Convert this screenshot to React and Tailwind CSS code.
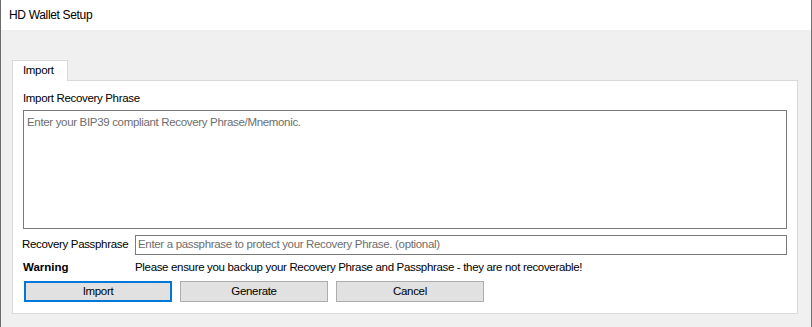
import React from 'react';

export default function App() {
    return (
        <div className="w-[812px] h-[327px] flex flex-col bg-[#f0f0f0] border-l border-l-[#6b6b6b] border-r border-r-[#717171] text-[11.5px] tracking-[-0.33px] text-black" style={{ fontFamily: '"Liberation Sans", Arial, sans-serif' }}>
            {/* Title bar */}
            <div className="h-[30px] shrink-0 bg-white flex items-center pl-[8px]">
                <span className="leading-none text-[12px]">HD Wallet Setup</span>
            </div>

            <div className="flex-1 pt-[30px] pl-[11px] pr-[13px]">
                {/* Tabs */}
                <div className="flex">
                    <div className="relative z-10 -mb-px w-[56px] h-[21px] bg-white border border-b-0 border-[#d9d9d9] flex items-center pl-[10px]">
                        Import
                    </div>
                </div>

                {/* Panel */}
                <div className="h-[234px] bg-white border border-[#d9d9d9] pt-[9px] pl-[10px] pr-[10px] flex flex-col">
                    <div className="h-[16px] leading-[16px] mb-[4px]">Import Recovery Phrase</div>
                    <div className="h-[119px] border border-[#7a7a7a] px-[3px] pt-[3px] text-[#6d6d6d] leading-[16px]">
                        Enter your BIP39 compliant Recovery Phrase/Mnemonic.
                    </div>

                    <div className="mt-[6px] flex items-center h-[20px]">
                        <div className="w-[113px] -ml-px whitespace-nowrap">Recovery Passphrase</div>
                        <div className="flex-1 h-[20px] border border-[#7a7a7a] flex items-center px-[2px] text-[#6d6d6d] whitespace-nowrap">
                            Enter a passphrase to protect your Recovery Phrase. (optional)
                        </div>
                    </div>

                    <div className="mt-[3px] h-[20px] flex items-center">
                        <div className="w-[112px] font-bold tracking-normal">Warning</div>
                        <div className="whitespace-nowrap">Please ensure you backup your Recovery Phrase and Passphrase - they are not recoverable!</div>
                    </div>

                    <div className="mt-[3px] ml-px flex gap-[8px]">
                        <button className="w-[148px] h-[21px] bg-[#e1e1e1] border-2 border-[#0078d7] flex items-center justify-center leading-none">Import</button>
                        <button className="w-[148px] h-[21px] bg-[#e1e1e1] border border-[#adadad] flex items-center justify-center leading-none">Generate</button>
                        <button className="w-[148px] h-[21px] bg-[#e1e1e1] border border-[#adadad] flex items-center justify-center leading-none">Cancel</button>
                    </div>
                </div>
            </div>
        </div>
    );
}
